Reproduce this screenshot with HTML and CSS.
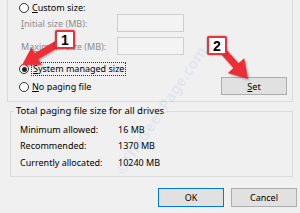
FILE: index.html
```html
<!DOCTYPE html>
<html>
<head>
<meta charset="utf-8">
<link rel="stylesheet" href="styles.css">
</head>
<body>
<div class="dialog">
  <div class="group upper">
    <div class="row custom"><span class="radio"></span><span><u>C</u>ustom size:</span></div>
    <div class="field"><span class="flabel"><u>I</u>nitial size (MB):</span><span class="input"></span></div>
    <div class="field second"><span class="flabel">Ma<u>x</u>imum size (MB):</span><span class="input"></span></div>
    <div class="split">
      <div class="col">
        <div class="row sys"><span class="radio checked"></span><span class="focus"><u>S</u>ystem managed size</span></div>
        <div class="row nopage"><span class="radio"></span><span><u>N</u>o paging file</span></div>
      </div>
      <button class="btn set"><u>S</u>et</button>
    </div>
  </div>
  <fieldset class="lower">
    <legend>Total paging file size for all drives</legend>
    <div class="stats">
      <span>Minimum allowed:</span><span>16 MB</span>
      <span>Recommended:</span><span>1370 MB</span>
      <span>Currently allocated:</span><span>10240 MB</span>
    </div>
  </fieldset>
  <div class="buttons">
    <button class="btn ok">OK</button>
    <button class="btn">Cancel</button>
  </div>
</div>
<div class="watermark">©TheGeekPage.com</div>
<svg class="arrows" width="300" height="213" viewBox="0 0 300 213">
  <polygon points="55.2,41 58.8,47 38.4,59.2 41.75,64.8 22,65 31.45,47.6 34.8,53.2"/>
  <polygon points="224.6,47.7 238.6,63.3 244.2,58.3 248,79 227.8,72.9 233.4,67.9 219.4,52.3"/>
</svg>
<div class="callout c1">1</div>
<div class="callout c2">2</div>
</body>
</html>
```
FILE: styles.css
```css
html, body {
  margin: 0;
  padding: 0;
}
body {
  width: 300px;
  height: 213px;
  overflow: hidden;
  position: relative;
  background: #f0f0f0;
  font-family: "Noto Sans", "Open Sans", sans-serif;
  font-size: 9px;
  color: #000;
}
u { text-decoration: underline; text-underline-offset: 1px; }
.dialog { display: flex; flex-direction: column; }
.upper {
  box-sizing: border-box;
  height: 108px;
  margin: -6px 7px 0 7px;
  border: 1px solid #dcdcdc;
  padding: 6px 5px 0 11px;
  display: flex;
  flex-direction: column;
}
.row {
  display: flex;
  align-items: center;
  gap: 3px;
  height: 14px;
  line-height: 12px;
}
.custom { height: 13px; }
.radio {
  box-sizing: border-box;
  width: 10px;
  height: 10px;
  border: 1px solid #333;
  border-radius: 50%;
  background: #fff;
  display: flex;
  align-items: center;
  justify-content: center;
  flex: none;
}
.radio.checked::after {
  content: "";
  width: 5px;
  height: 5px;
  border-radius: 50%;
  background: #222;
}
.field {
  display: flex;
  align-items: center;
  height: 18px;
  padding-left: 2px;
  color: #8c8c8c;
}
.field.second { margin-top: 5px; }
.flabel { width: 96px; }
.input {
  box-sizing: border-box;
  width: 67px;
  height: 18px;
  border: 1px solid #cfcfcf;
  background: #f3f3f3;
}
.split {
  display: flex;
  justify-content: space-between;
  margin-top: 7px;
}
.nopage { margin-top: 4px; }
.focus {
  outline: 1px dotted #333;
  outline-offset: 0;
  padding: 0 1px;
}
.btn {
  box-sizing: border-box;
  width: 66px;
  height: 19px;
  border: 1px solid #adadad;
  background: #e1e1e1;
  font: inherit;
  color: #000;
  padding: 0;
}
.set { height: 18px; margin-top: 15px; }
.lower {
  box-sizing: border-box;
  height: 72px;
  margin: 3px 7px 0 10px;
  border: 1px solid #dcdcdc;
  padding: 0 0 0 9px;
  min-inline-size: 0;
}
.lower legend {
  padding: 0 2px;
  margin-left: -6px;
  line-height: 12px;
  font-size: 9.5px;
}
.stats {
  display: grid;
  grid-template-columns: 98px auto;
  grid-auto-rows: 16.5px;
  align-items: center;
  padding-top: 4px;
}
.buttons {
  display: flex;
  justify-content: flex-end;
  gap: 7px;
  padding-right: 3px;
  margin-top: 11px;
}
.ok { border-color: #0078d7; }
.watermark {
  position: absolute;
  left: 85px;
  top: 100px;
  font: bold 15px "Noto Sans", sans-serif;
  color: rgba(90, 140, 210, 0.11);
  transform: rotate(-56deg);
  white-space: nowrap;
  pointer-events: none;
}
.arrows {
  position: absolute;
  left: 0;
  top: 0;
  fill: #ee2e36;
  filter: drop-shadow(1px 1px 1px rgba(0,0,0,0.35));
}
.callout {
  position: absolute;
  box-sizing: border-box;
  width: 20px;
  height: 19px;
  background: #fff;
  border: 2px solid #e8323c;
  border-radius: 2px;
  box-shadow: 0 0 2px rgba(0,0,0,0.45);
  font: bold 14px "Liberation Sans", Arial, sans-serif;
  display: flex;
  align-items: center;
  justify-content: center;
}
.c1 { left: 55px; top: 30px; }
.c2 { left: 207px; top: 36px; }
```
